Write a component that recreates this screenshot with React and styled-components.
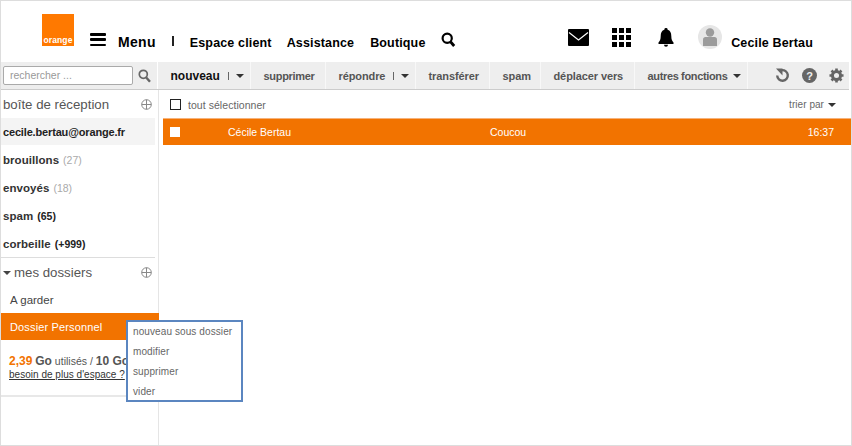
import React from "react";
import styled, { createGlobalStyle } from "styled-components";

const Global = createGlobalStyle`
  html, body { margin: 0; padding: 0; background: #fff; }
  body { font-family: "Liberation Sans", Arial, sans-serif; color: #333; }
`;

const Page = styled.div`
  width: 852px; height: 446px; box-sizing: border-box;
  border: 1px solid #ddd; display: flex; flex-direction: column; overflow: hidden;
`;
const Header = styled.header`
  height: 61px; flex: none; display: flex; align-items: flex-start;
  padding: 0 38px 0 41px; box-sizing: border-box;
`;
const Logo = styled.div`
  width: 32px; height: 32px; margin-top: 13px; background: #ff7900; flex: none;
  display: flex; align-items: flex-end; justify-content: center; box-sizing: border-box; padding-bottom: 1px;
`;
const LogoText = styled.span`
  font-size: 8.5px; font-weight: 700; color: #fff; line-height: 9px; letter-spacing: .1px;
`;
const Burger = styled.div`
  width: 16px; height: 13px; margin: 32px 0 0 16px; flex: none;
  display: flex; flex-direction: column; justify-content: space-between;
  i { display: block; height: 2.5px; background: #000; border-radius: 1px; }
`;
const NavItem = styled.span`
  font-size: ${p => p.$size || 12.5}px; font-weight: 700; color: #000; margin-left: ${p => p.$ml}px;
  margin-top: ${p => p.$mt || 34}px; line-height: 16px; white-space: nowrap; letter-spacing: ${p => p.$ls ?? .15}px; flex: none;
`;
const Sep = styled.span`
  width: 2px; height: 10px; background: #222; margin: 35px 0 0 16px; flex: none;
`;
const HeadIcon = styled.svg`
  display: block; flex: none; margin-left: ${p => p.$ml}px; margin-top: ${p => p.$mt}px;
`;
const RightGroup = styled.div`
  margin-left: auto; display: flex; align-items: flex-start;
`;
const Toolbar = styled.div`
  height: 28px; flex: none; background: #eee; border-bottom: 1px solid #ccc; display: flex; box-sizing: border-box; margin-right: 2px;
`;
const SearchCell = styled.div`
  width: 157px; flex: none; display: flex; align-items: center; padding-left: 2px; box-sizing: border-box;
  border-right: 1px solid #fff;
`;
const SearchInput = styled.div`
  width: 130px; height: 19px; box-sizing: border-box; border: 1px solid #aaa; border-radius: 2px; background: #fff;
  font-size: 10.5px; color: #999; padding-left: 6px; line-height: 17px;
`;
const SearchGlass = styled.svg`
  display: block; margin-left: 5px; flex: none;
`;
const ToolBtn = styled.div`
  height: 27px; box-sizing: border-box; width: ${p => p.$w}px; flex: none; padding-left: 12.5px;
  border-right: 1px solid #f8f8f8; display: flex; align-items: center; gap: ${p => p.$gap || 0}px;
  font-size: ${p => p.$dark ? 12 : 11}px; font-weight: 700; color: ${p => p.$dark ? "#111" : "#555"};
  letter-spacing: ${p => p.$dark ? 0 : (p.$ls ?? -.1)}px; white-space: nowrap;
`;
const Caret = styled.span`
  display: inline-block; width: 0; height: 0; border-left: 4px solid transparent; border-right: 4px solid transparent;
  border-top: 4px solid ${p => p.$c || "#333"}; margin-top: 1px;
`;
const Pipe = styled.span`
  width: 1px; height: 8px; background: #666; margin-left: 8px; margin-right: 7px;
`;
const ToolIcons = styled.div`
  flex: 1; display: flex; align-items: center; justify-content: flex-end; gap: 12px; padding-right: 5px;
`;
const Body = styled.div`
  flex: 1; display: flex; min-height: 0; position: relative;
`;
const Sidebar = styled.aside`
  width: 158px; flex: none; border-right: 1px solid #e5e5e5; box-sizing: border-box;
  display: flex; flex-direction: column;
`;
const SideTitle = styled.div`
  height: 28px; display: flex; align-items: center; justify-content: space-between; padding: ${p => p.$pt || 0}px 6px 0 2px;
  font-size: 13.25px; color: #555; flex: none; box-sizing: border-box;
`;
const Account = styled.div`
  height: 27px; flex: none; width: 154px; background: #f4f4f4; display: flex; align-items: center; padding-left: 2px; box-sizing: border-box;
  font-size: 11px; font-weight: 700; color: #222; letter-spacing: -.16px; white-space: nowrap;
`;
const Folder = styled.div`
  height: 28px; flex: none; display: flex; align-items: center; padding: 1px 0 0 2px; gap: 4px; box-sizing: border-box;
  font-size: 11.5px; font-weight: 700; color: #333; letter-spacing: .05px;
`;
const Count = styled.span`
  font-weight: ${p => p.$strong ? 700 : 400}; color: ${p => p.$strong ? "#222" : "#aaa"}; letter-spacing: 0; font-size: 10.5px;
`;
const Divider = styled.div`
  width: 154px; height: 1px; background: #ddd; flex: none;
`;
const SubItem = styled.div`
  height: 27px; flex: none; display: flex; align-items: center; padding-left: 9px; box-sizing: border-box;
  font-size: ${p => p.$active ? 11 : 11.5}px; background: ${p => p.$active ? "#f27300" : "transparent"}; color: ${p => p.$active ? "#fff" : "#444"};
  letter-spacing: ${p => p.$active ? .15 : 0}px; margin-right: -1px;
`;
const Quota = styled.div`
  padding: 14px 0 0 8px; height: 41px; flex: none; font-size: 10.5px; color: #555; line-height: 14px; white-space: nowrap;
  border-bottom: 2px solid #e8e8e8; box-sizing: content-box;
  b { font-size: 12px; color: #555; }
  b.o { color: #f27300; }
`;
const QuotaLink = styled.div`
  text-decoration: underline; color: #333; font-size: 10px; line-height: 14px; letter-spacing: .02px;
`;
const Main = styled.main`
  flex: 1; min-width: 0; display: flex; flex-direction: column; padding-left: 4px;
`;
const ListHead = styled.div`
  height: 28px; flex: none; display: flex; align-items: center; justify-content: space-between; padding: 1px 15px 0 7px;
  font-size: 10.5px; color: #666; letter-spacing: .05px; box-sizing: border-box;
`;
const Group = styled.span`
  display: flex; align-items: center; gap: ${p => p.$gap || 0}px;
`;
const SortLabel = styled.span`
  font-size: 10px;
`;
const Check = styled.span`
  width: 9px; height: 9px; border: 1px solid #222; background: #fff; display: inline-block; flex: none;
`;
const MailRow = styled.div`
  height: 27px; flex: none; background: #f27300; color: #fff; font-size: 10.5px; display: flex; align-items: center;
  padding-left: 7px; border-top: 1px solid #f6b27a; box-sizing: border-box;
`;
const RowCheck = styled.span`
  width: 10px; height: 10px; background: #fff; flex: none; margin-right: 48px;
`;
const Sender = styled.span` width: 262px; flex: none; `;
const Subject = styled.span` flex: 1; `;
const Time = styled.span` margin-right: 17px; `;
const Menu = styled.div`
  position: absolute; left: 125px; top: 230px; width: 117px; height: 82px; box-sizing: border-box;
  border: 2px solid #5b86c0; background: #fff; padding: 0 5px; z-index: 2;
`;
const MenuItem = styled.div`
  height: 20px; line-height: 20px; font-size: 10px; color: #666; letter-spacing: .1px; white-space: nowrap;
`;

const PlusCircle = () => (
  <svg width="11" height="11" viewBox="0 0 11 11" fill="none" stroke="#888" strokeWidth="1">
    <circle cx="5.5" cy="5.5" r="4.8" />
    <path d="M5.5 .7v9.6M.7 5.5h9.6" />
  </svg>
);

export default function App() {
  return (
    <>
      <Global />
      <Page>
        <Header>
          <Logo><LogoText>orange</LogoText></Logo>
          <Burger><i /><i /><i /></Burger>
          <NavItem $size={14} $ml={12} $mt={33} $ls={.3}>Menu</NavItem>
          <Sep />
          <NavItem $ml={16}>Espace client</NavItem>
          <NavItem $ml={15}>Assistance</NavItem>
          <NavItem $ml={16}>Boutique</NavItem>
          <HeadIcon $ml={15} $mt={31} width="15" height="16" viewBox="0 0 15 16" fill="none" stroke="#000">
            <circle cx="6.2" cy="6.2" r="4.6" strokeWidth="2.2" />
            <path d="M9.5 9.8 13.2 14" strokeWidth="2.8" />
          </HeadIcon>
          <RightGroup>
            <HeadIcon $ml={0} $mt={28} width="21" height="17" viewBox="0 0 21 17">
              <rect width="21" height="17" rx="1" fill="#000" />
              <path d="M1 3.5 10.5 11 20 3.5" fill="none" stroke="#fff" strokeWidth="1.2" />
            </HeadIcon>
            <HeadIcon $ml={23} $mt={27} width="19" height="19" viewBox="0 0 19 19" fill="#000">
              {[0, 7, 14].flatMap(y => [0, 7, 14].map(x => <rect key={x + "-" + y} x={x} y={y} width="5" height="5" />))}
            </HeadIcon>
            <HeadIcon $ml={27} $mt={27} width="16" height="19" viewBox="0 0 16 19" fill="#000">
              <path d="M8 0a1.6 1.6 0 0 1 1.6 1.8C12.2 2.5 13.3 4.8 13.3 8c0 3.4.8 5 2.2 6.6V16H.5v-1.4C1.900 13 2.700 11.400 2.700 8c0-3.200 1.100-5.500 3.700-6.200A1.600 1.600 0 0 1 8 0Z" />
              <path d="M6 16.800h4A2 2 0 0 1 8 18.800a2 2 0 0 1-2-2Z" />
            </HeadIcon>
            <HeadIcon $ml={24} $mt={24} width="24" height="24" viewBox="0 0 24 24">
              <circle cx="12" cy="12" r="12" fill="#e6e6e6" />
              <circle cx="12" cy="7.500" r="4.200" fill="#9b9b9b" />
              <path d="M5 21v-6.500C5 12.500 6.500 12 8.500 12h7c2 0 3.500.5 3.500 2.500V21Z" fill="#9b9b9b" />
            </HeadIcon>
            <NavItem $ml={9}>Cecile Bertau</NavItem>
          </RightGroup>
        </Header>
        <Toolbar>
          <SearchCell>
            <SearchInput>rechercher ...</SearchInput>
            <SearchGlass width="13" height="14" viewBox="0 0 13 14" fill="none" stroke="#666">
              <circle cx="5.300" cy="5.300" r="4" strokeWidth="1.700" />
              <path d="M8.200 8.500 12 12.800" strokeWidth="2.400" />
            </SearchGlass>
          </SearchCell>
          <ToolBtn $w={93} $dark>nouveau<Pipe /><Caret /></ToolBtn>
          <ToolBtn $w={75} $ls={-.3}>supprimer</ToolBtn>
          <ToolBtn $w={90}>répondre<Pipe /><Caret /></ToolBtn>
          <ToolBtn $w={74}>transférer</ToolBtn>
          <ToolBtn $w={51}>spam</ToolBtn>
          <ToolBtn $w={94}>déplacer vers</ToolBtn>
          <ToolBtn $w={113} $gap={6} $ls={-.35}>autres fonctions<Caret /></ToolBtn>
          <ToolIcons>
            <svg width="15" height="15" viewBox="0 0 15 15" fill="none" stroke="#666" strokeWidth="2.400">
              <path d="M6.500 2.200A5.300 5.300 0 1 1 2.200 7.500" />
              <path d="M1 .5h6.500v7Z" fill="#666" stroke="none" />
            </svg>
            <svg width="15" height="15" viewBox="0 0 15 15">
              <circle cx="7.500" cy="7.500" r="7.500" fill="#666" />
              <text x="7.500" y="11.500" textAnchor="middle" fontSize="11" fontWeight="700" fill="#eee" fontFamily="Liberation Sans">?</text>
            </svg>
            <svg width="15" height="15" viewBox="0 0 16 16" fill="none" stroke="#666">
              <circle cx="8" cy="8" r="4.300" strokeWidth="3.200" />
              <path d="M8 .5v3M8 12.500v3M.5 8h3M12.500 8h3M2.700 2.700l2.200 2.200M11.100 11.100l2.200 2.200M2.700 13.300l2.200-2.200M11.100 4.900l2.200-2.200" strokeWidth="2.800" />
            </svg>
          </ToolIcons>
        </Toolbar>
        <Body>
          <Sidebar>
            <SideTitle $pt={1}><span>boîte de réception</span><PlusCircle /></SideTitle>
            <Account>cecile.bertau@orange.fr</Account>
            <Folder>brouillons <Count>(27)</Count></Folder>
            <Folder>envoyés <Count>(18)</Count></Folder>
            <Folder>spam <Count $strong>(65)</Count></Folder>
            <Folder>corbeille <Count $strong>(+999)</Count></Folder>
            <Divider />
            <SideTitle>
              <Group $gap={3}><Caret $c="#444" />mes dossiers</Group>
              <PlusCircle />
            </SideTitle>
            <SubItem>A garder</SubItem>
            <SubItem $active>Dossier Personnel</SubItem>
            <Quota>
              <b className="o">2,39</b> <b>Go</b> utilisés / <b>10 Go</b>
              <QuotaLink>besoin de plus d'espace ?</QuotaLink>
            </Quota>
          </Sidebar>
          <Main>
            <ListHead>
              <Group $gap={7}><Check />tout sélectionner</Group>
              <Group $gap={4}><SortLabel>trier par</SortLabel><Caret /></Group>
            </ListHead>
            <MailRow>
              <RowCheck />
              <Sender>Cécile Bertau</Sender>
              <Subject>Coucou</Subject>
              <Time>16:37</Time>
            </MailRow>
          </Main>
          <Menu>
            <MenuItem>nouveau sous dossier</MenuItem>
            <MenuItem>modifier</MenuItem>
            <MenuItem>supprimer</MenuItem>
            <MenuItem>vider</MenuItem>
          </Menu>
        </Body>
      </Page>
    </>
  );
}
